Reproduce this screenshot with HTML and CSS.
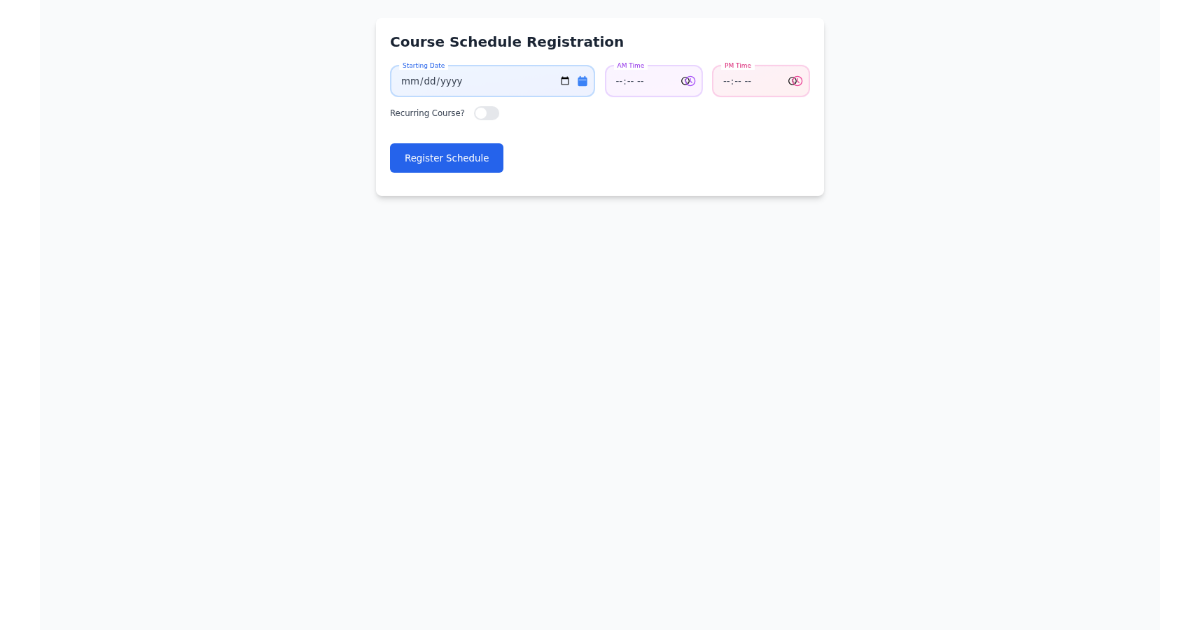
FILE: index.html
```html
<!DOCTYPE html>
<html lang="en">
<head>
    <meta charset="UTF-8">
    <meta name="viewport" content="width=device-width, initial-scale=1.0">
    <title>Course Schedule Registration</title>
    <link rel="stylesheet" href="styles.css">
</head>
<body>
    <div class="container">
        <form class="card">
            <h1>Course Schedule Registration</h1>

            <div class="time-grid">
                <div class="field field-blue">
                    <label for="start-date">Starting Date</label>
                    <input type="date" id="start-date">
                    <svg class="field-icon" viewBox="0 0 24 24" fill="currentColor">
                        <path d="M7 1a1.5 1.5 0 0 1 1.5 1.5V4h7V2.500a1.500 1.500 0 0 1 3 0V4H19a3 3 0 0 1 3 3v13a3 3 0 0 1-3 3H5a3 3 0 0 1-3-3V7a3 3 0 0 1 3-3h.5V2.500A1.500 1.500 0 0 1 7 1z"/>
                        <path d="M4 9h16v1.500H4z" fill="#dbeafe"/>
                    </svg>
                </div>

                <div class="field field-purple">
                    <label for="am-time">AM Time</label>
                    <input type="time" id="am-time">
                    <svg class="field-icon" viewBox="0 0 24 24" fill="none" stroke="currentColor" stroke-width="2">
                        <circle cx="12" cy="12" r="10"/>
                        <path d="M12 6v6l4 4"/>
                    </svg>
                </div>

                <div class="field field-pink">
                    <label for="pm-time">PM Time</label>
                    <input type="time" id="pm-time">
                    <svg class="field-icon" viewBox="0 0 24 24" fill="none" stroke="currentColor" stroke-width="2">
                        <circle cx="12" cy="12" r="10"/>
                        <path d="M12 6v6l4 4"/>
                    </svg>
                </div>
            </div>

            <div class="recurring">
                <span>Recurring Course?</span>
                <button type="button" class="toggle"><span class="knob"></span></button>
            </div>

            <button type="submit" class="submit-btn">Register Schedule</button>
        </form>
    </div>
</body>
</html>
```

FILE: styles.css
```css
/* Page */
html, body {
    margin: 0;
    background-color: #fff;
    font-family: "DejaVu Sans", sans-serif;
    color: #1f2937;
}

.container {
    width: 1120px;
    height: 630px;
    padding-top: 18px;
    margin: 0 auto;
    box-sizing: border-box;
    background-color: #f9fafb;
}

/* Card is laid out at 640px and scaled down */
.card {
    width: 640px;
    margin: 0 auto;
    padding: 20px 20px 33px;
    box-sizing: border-box;
    background-color: #fff;
    border-radius: 8px;
    box-shadow: 0 6px 10px -1px rgba(0, 0, 0, 0.12), 0 3px 6px -2px rgba(0, 0, 0, 0.12);
    transform: scale(0.7);
    transform-origin: top center;
    will-change: transform;
}

h1 {
    margin: 0;
    font-size: 20px;
    line-height: 28px;
    font-weight: 700;
    color: #1a2433;
}

/* Date and time fields */
.time-grid {
    display: grid;
    grid-template-columns: 293px 1fr 1fr;
    gap: 13.5px;
    margin-top: 19px;
}

.field {
    position: relative;
    height: 46px;
}

.field label {
    position: absolute;
    top: -5px;
    left: 13px;
    padding: 0 5px;
    background-color: #fff;
    font-size: 9px;
    line-height: 12px;
}

.field input {
    display: block;
    width: 100%;
    height: 100%;
    padding: 0 16px 0 13px;
    box-sizing: border-box;
    border: 2.5px solid;
    border-radius: 12px;
    font-family: inherit;
    font-size: 13.33px;
    color: #374151;
    outline: none;
}

.field-icon {
    position: absolute;
    top: 15px;
    right: 10px;
    width: 16px;
    height: 16px;
}

.field-blue input {
    padding-right: 34px;
    border-color: #bfdbfe;
    background: linear-gradient(to bottom right, #eff6ff, #eef2ff);
}

.field-blue label {
    color: #2563eb;
}

.field-blue .field-icon {
    color: #3b82f6;
}

.field-purple input {
    border-color: #e9d5ff;
    background: linear-gradient(to bottom right, #faf5ff, #fdf4ff);
}

.field-purple label {
    color: #9333ea;
}

.field-purple .field-icon {
    color: #a855f7;
}

.field-pink input {
    border-color: #fbcfe8;
    background: linear-gradient(to bottom right, #fdf2f8, #fff1f2);
}

.field-pink label {
    color: #db2777;
}

.field-pink .field-icon {
    color: #ec4899;
}

/* Native picker icon keeps its default look */
.field input::-webkit-calendar-picker-indicator {
    margin: 0;
    padding: 0;
    width: 14px;
    height: 14px;
}

/* Recurring toggle */
.recurring {
    display: flex;
    align-items: center;
    gap: 13px;
    margin-top: 13px;
    font-size: 11.7px;
    color: #374151;
}

.toggle {
    position: relative;
    width: 36px;
    height: 20px;
    padding: 0;
    border: none;
    border-radius: 10px;
    background-color: #e5e7eb;
}

.knob {
    position: absolute;
    top: 1px;
    left: 1px;
    width: 18px;
    height: 18px;
    border-radius: 50%;
    background-color: #fff;
    border: 1px solid #e5e7eb;
    box-sizing: border-box;
}

/* Submit */
.submit-btn {
    display: block;
    height: 42px;
    margin-top: 33px;
    padding: 0 21px;
    border: none;
    border-radius: 6px;
    background-color: #2563eb;
    color: #fff;
    font-family: inherit;
    font-size: 13.33px;
}
```
